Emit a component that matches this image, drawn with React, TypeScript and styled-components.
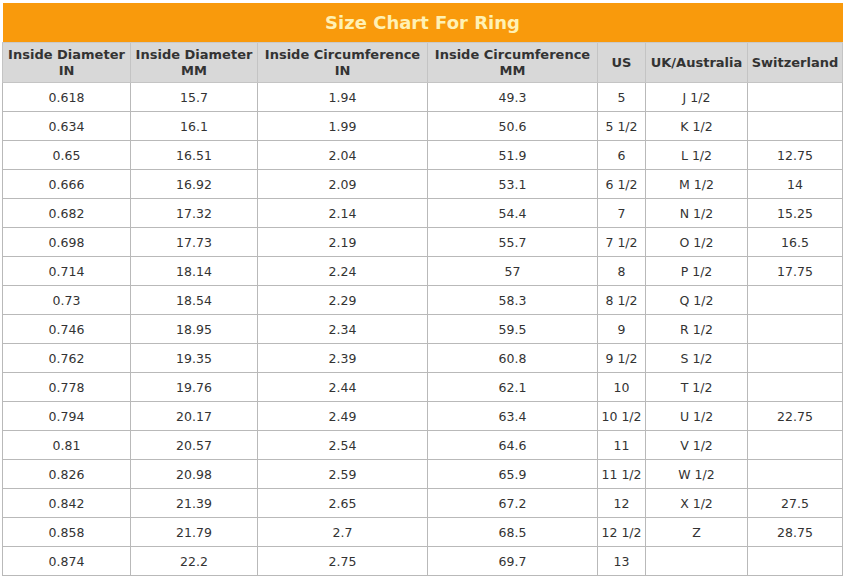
import styled, { createGlobalStyle } from "styled-components";

const GlobalStyle = createGlobalStyle`
  body {
    margin: 0;
    background: #ffffff;
    font-family: "DejaVu Sans", Verdana, sans-serif;
  }
`;

const Page = styled.div`
  padding: 3px 2px 0 2px;
  width: 840px;
`;

const Chart = styled.table`
  width: 840px;
  border-collapse: collapse;
  table-layout: fixed;
  font-size: 12.5px;
  color: #333333;
`;

const Col = styled.col<{ $w: number }>`
  width: ${(p) => p.$w}px;
`;

const TitleCell = styled.th`
  background: #f99a0c;
  color: #fff1b4;
  height: 39px;
  padding: 0;
  font-size: 18px;
  font-weight: bold;
  text-align: center;
  border: none;
  border-bottom: 1px solid #c9c9c9;
`;

const HeadCell = styled.th`
  height: 39px;
  padding: 0;
  background: #d8d8d8;
  color: #333333;
  font-weight: bold;
  font-size: 13px;
  line-height: 16px;
  text-align: center;
  border: 1px solid #c4c4c4;
  white-space: nowrap;
`;

const Cell = styled.td`
  height: 28px;
  padding: 0;
  text-align: center;
  border: 1px solid #b9b9b9;
  white-space: nowrap;
`;

const columns: { title: string; sub?: string; w: number }[] = [
  { title: "Inside Diameter", sub: "IN", w: 128 },
  { title: "Inside Diameter", sub: "MM", w: 127 },
  { title: "Inside Circumference", sub: "IN", w: 170 },
  { title: "Inside Circumference", sub: "MM", w: 170 },
  { title: "US", w: 48 },
  { title: "UK/Australia", w: 102 },
  { title: "Switzerland", w: 95 },
];

const rows: string[][] = [
  ["0.618", "15.7", "1.94", "49.3", "5", "J 1/2", ""],
  ["0.634", "16.1", "1.99", "50.6", "5 1/2", "K 1/2", ""],
  ["0.65", "16.51", "2.04", "51.9", "6", "L 1/2", "12.75"],
  ["0.666", "16.92", "2.09", "53.1", "6 1/2", "M 1/2", "14"],
  ["0.682", "17.32", "2.14", "54.4", "7", "N 1/2", "15.25"],
  ["0.698", "17.73", "2.19", "55.7", "7 1/2", "O 1/2", "16.5"],
  ["0.714", "18.14", "2.24", "57", "8", "P 1/2", "17.75"],
  ["0.73", "18.54", "2.29", "58.3", "8 1/2", "Q 1/2", ""],
  ["0.746", "18.95", "2.34", "59.5", "9", "R 1/2", ""],
  ["0.762", "19.35", "2.39", "60.8", "9 1/2", "S 1/2", ""],
  ["0.778", "19.76", "2.44", "62.1", "10", "T 1/2", ""],
  ["0.794", "20.17", "2.49", "63.4", "10 1/2", "U 1/2", "22.75"],
  ["0.81", "20.57", "2.54", "64.6", "11", "V 1/2", ""],
  ["0.826", "20.98", "2.59", "65.9", "11 1/2", "W 1/2", ""],
  ["0.842", "21.39", "2.65", "67.2", "12", "X 1/2", "27.5"],
  ["0.858", "21.79", "2.7", "68.5", "12 1/2", "Z", "28.75"],
  ["0.874", "22.2", "2.75", "69.7", "13", "", ""],
];

export default function App() {
  return (
    <Page>
      <GlobalStyle />
      <Chart>
        <colgroup>
          {columns.map((c, i) => (
            <Col key={i} $w={c.w} />
          ))}
        </colgroup>
        <thead>
          <tr>
            <TitleCell colSpan={7}>Size Chart For Ring</TitleCell>
          </tr>
          <tr>
            {columns.map((c, i) => (
              <HeadCell key={i}>
                {c.title}
                {c.sub && (
                  <>
                    <br />
                    {c.sub}
                  </>
                )}
              </HeadCell>
            ))}
          </tr>
        </thead>
        <tbody>
          {rows.map((r, i) => (
            <tr key={i}>
              {r.map((v, j) => (
                <Cell key={j}>{v}</Cell>
              ))}
            </tr>
          ))}
        </tbody>
      </Chart>
    </Page>
  );
}
